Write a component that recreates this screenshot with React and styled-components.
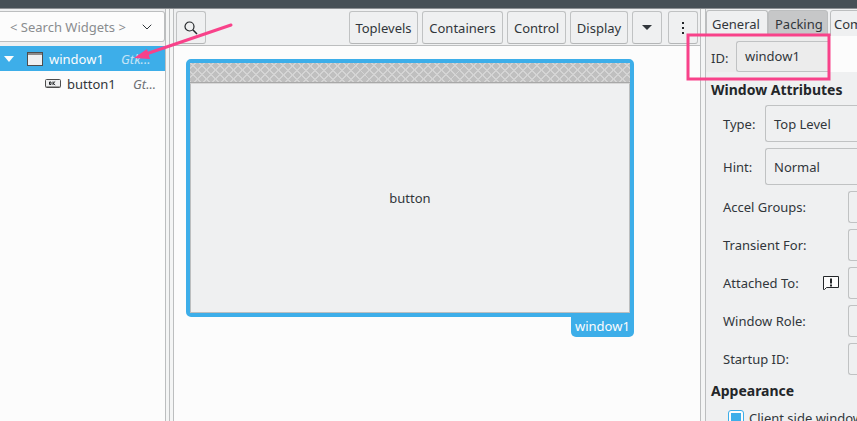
import styled, { createGlobalStyle } from "styled-components";
import { ChevronDown } from "lucide-react";

const GlobalStyle = createGlobalStyle`
  html, body {
    margin: 0;
    padding: 0;
    background: #eff0f1;
  }
  body {
    font-family: "Noto Sans", sans-serif;
    font-size: 13px;
    color: #31363b;
  }
`;

const Screen = styled.div`
  position: relative;
  width: 857px;
  height: 421px;
  overflow: hidden;
  display: flex;
  flex-direction: column;
`;

const TitleBar = styled.div`
  height: 8px;
  flex: none;
  background: #475057;
  border-bottom: 1px solid #8d9094;
`;

const Panes = styled.div`
  flex: 1;
  display: flex;
  min-height: 0;
`;

const Sidebar = styled.div`
  width: 165px;
  flex: none;
  display: flex;
  flex-direction: column;
  border-right: 1px solid #bcbebf;
  background: #fcfcfc;
`;

const SearchWrap = styled.div`
  height: 37px;
  flex: none;
  padding-top: 2px;
  box-sizing: border-box;
  background: #eff0f1;
`;

const SearchEntry = styled.div`
  height: 31px;
  box-sizing: border-box;
  display: flex;
  align-items: center;
  justify-content: space-between;
  padding: 0 9px 0 10px;
  background: #fcfcfc;
  border: 1px solid #bcbebf;
  border-left: none;
  border-radius: 0 3px 3px 0;
  color: #8a8c8f;
  svg {
    color: #31363b;
  }
`;

const TreeRow = styled.div`
  height: 25px;
  flex: none;
  display: flex;
  align-items: center;
  padding-left: ${(props) => props.$indent}px;
  background: ${(props) => (props.$selected ? "#3daee9" : "transparent")};
  color: ${(props) => (props.$selected ? "#fcfcfc" : "#31363b")};
`;

const Expander = styled.span`
  width: 0;
  height: 0;
  margin-right: 13px;
  border-left: 5px solid transparent;
  border-right: 5px solid transparent;
  border-top: 6px solid #fcfcfc;
`;

const TreeName = styled.span`
  width: ${(props) => props.$width}px;
  margin-left: 6px;
`;

const TreeType = styled.span`
  font-style: italic;
  opacity: 0.7;
`;

const Gutter = styled.div`
  width: ${(props) => props.$width}px;
  flex: none;
  box-sizing: border-box;
  background-color: #f4f5f5;
  background-image: linear-gradient(#bcbebf, #bcbebf);
  background-repeat: no-repeat;
  background-size: 1px 100%;
  background-position: ${(props) => props.$line}px 0;
  border-right: 1px solid #bcbebf;
`;

const Center = styled.div`
  flex: 1;
  min-width: 0;
  display: flex;
  flex-direction: column;
`;

const Toolbar = styled.div`
  height: 37px;
  flex: none;
  box-sizing: border-box;
  display: flex;
  align-items: flex-start;
  gap: 4px;
  padding: 2px 0 0 2px;
  background: #eff0f1;
  border-bottom: 1px solid #bcbebf;
`;

const ToolButton = styled.div`
  height: 33px;
  box-sizing: border-box;
  flex: none;
  width: ${(props) => props.$width}px;
  margin-left: ${(props) => props.$gapBefore || 0}px;
  display: flex;
  align-items: center;
  justify-content: center;
  background: #eff0f1;
  border: 1px solid #c0c2c3;
  border-bottom-color: #b4b6b7;
  border-radius: 3px;
  color: #31363b;
`;

const Caret = styled.span`
  width: 0;
  height: 0;
  border-left: 5px solid transparent;
  border-right: 5px solid transparent;
  border-top: 5px solid #31363b;
`;

const Canvas = styled.div`
  flex: 1;
  background: #fcfcfc;
  padding: 13px 0 0 12px;
`;

const PreviewWrap = styled.div`
  width: 448px;
  display: flex;
  flex-direction: column;
`;

const Preview = styled.div`
  height: 258px;
  box-sizing: border-box;
  border: 4px solid #3daee9;
  border-radius: 5px 5px 0 5px;
  display: flex;
  flex-direction: column;
  background: #eff0f1;
`;

const PreviewTitle = styled.div`
  height: 19px;
  flex: none;
  background-color: #bfbfbf;
  background-image:
    repeating-linear-gradient(45deg, #d4d4d4 0 1.4px, transparent 1.4px 6.4px),
    repeating-linear-gradient(-45deg, #d4d4d4 0 1.4px, transparent 1.4px 6.4px);
  border-bottom: 1px solid #a8a8a8;
`;

const PreviewBody = styled.div`
  flex: 1;
  display: flex;
  align-items: center;
  justify-content: center;
  border: 1px solid #bcbebf;
  border-top: 1px solid #d8d8d8;
`;

const PreviewTag = styled.div`
  align-self: flex-end;
  width: 63px;
  height: 20px;
  box-sizing: border-box;
  padding-left: 4px;
  line-height: 19px;
  background: #3daee9;
  color: #fcfcfc;
  border-radius: 0 0 5px 5px;
`;

const Inspector = styled.div`
  width: 151px;
  flex: none;
  display: flex;
  flex-direction: column;
  background: #eff0f1;
  box-sizing: border-box;
`;

const TabStrip = styled.div`
  height: 28px;
  flex: none;
  display: flex;
  padding-top: 1px;
  box-sizing: border-box;
`;

const Tab = styled.div`
  width: ${(props) => props.$width}px;
  flex: none;
  box-sizing: border-box;
  display: flex;
  align-items: center;
  justify-content: flex-start;
  padding-left: ${(props) => props.$pad}px;
  background: ${(props) => (props.$dim ? "#c6c7c8" : "#eff0f1")};
  border: 1px solid #bcbebf;
  border-bottom: ${(props) => (props.$active ? "none" : "1px solid #bcbebf")};
  border-radius: 3px 3px 0 0;
  margin-right: ${(props) => props.$after}px;
  white-space: nowrap;
  overflow: hidden;
`;

const IdRow = styled.div`
  display: flex;
  height: 36px;
  flex: none;
  align-items: stretch;
  margin-top: -1px;
`;

const IdLabel = styled.div`
  width: 30px;
  flex: none;
  padding-left: 5px;
  box-sizing: border-box;
  line-height: 44px;
  background: #ececec;
`;

const IdHolder = styled.div`
  width: 93px;
  flex: none;
  padding-top: 5px;
  box-sizing: border-box;
  background: #ececec;
`;

const IdInput = styled.div`
  height: 31px;
  box-sizing: border-box;
  border: 1px solid #c0c2c3;
  border-radius: 3px 0 0 3px;
  border-right: none;
  padding-left: 8px;
  line-height: 29px;
`;

const IdRest = styled.div`
  flex: 1;
  background: #fcfcfc;
`;

const SectionTitle = styled.div`
  font-weight: 700;
  font-size: 14px;
  line-height: 19px;
  padding-left: 5px;
  margin-top: ${(props) => props.$top}px;
  color: #232629;
`;

const FormRow = styled.div`
  height: ${(props) => props.$height}px;
  flex: none;
  display: flex;
  align-items: center;
  padding-left: 17px;
  margin-top: ${(props) => props.$top}px;
  position: relative;
`;

const RowLabel = styled.div`
  width: ${(props) => props.$width}px;
  flex: none;
  white-space: nowrap;
`;

const Field = styled.div`
  flex: 1;
  align-self: stretch;
  box-sizing: border-box;
  background: #eff0f1;
  border: 1px solid #c0c2c3;
  border-right: none;
  border-radius: 3px 0 0 3px;
  padding-left: 8px;
  display: flex;
  align-items: center;
`;

const WarnSlot = styled.span`
  position: absolute;
  left: 117px;
  top: 8px;
  display: flex;
`;

const CheckRow = styled.div`
  display: flex;
  align-items: center;
  gap: 5px;
  padding-left: 22px;
  margin-top: 9px;
  white-space: nowrap;
`;

const CheckBox = styled.span`
  width: 16px;
  height: 16px;
  flex: none;
  box-sizing: border-box;
  border: 1px solid #3daee9;
  border-radius: 3px;
  padding: 2px;
  background: #fcfcfc;
  &::before {
    content: "";
    display: block;
    width: 10px;
    height: 10px;
    background: #3daee9;
  }
`;

const Annotations = styled.svg`
  position: absolute;
  left: 0;
  top: 0;
  pointer-events: none;
`;

function WindowIcon() {
  return (
    <svg width="16" height="14" viewBox="0 0 16 14">
      <rect x="0.5" y="0.5" width="15" height="13" fill="#eff0f1" stroke="#4d4d4d" />
      <rect x="1" y="1" width="14" height="2" fill="#8a8a8a" />
    </svg>
  );
}

function ButtonIcon() {
  return (
    <svg width="16" height="9" viewBox="0 0 16 9">
      <rect x="0.5" y="0.5" width="15" height="8" rx="1" fill="#eff0f1" stroke="#4d4d4d" />
      <rect x="1" y="7" width="14" height="1" fill="#a0a0a0" />
      <path d="M4.5 3h1.5v2.5h-1.5zM8 2.5v3.5M8.2 4.2l2-1.7M8.2 4.2l2 1.8" fill="none" stroke="#232629" strokeWidth="1" />
    </svg>
  );
}

function SearchIcon() {
  return (
    <svg width="14" height="14" viewBox="0 0 14 14">
      <circle cx="5.5" cy="5.5" r="4.5" fill="none" stroke="#232629" strokeWidth="1.2" />
      <path d="M8.8 8.8L13 13" fill="none" stroke="#232629" strokeWidth="1.5" />
    </svg>
  );
}

function WarnIcon() {
  return (
    <svg width="16" height="16" viewBox="0 0 16 16">
      <path d="M0.5 1.5h15v11h-12l-2 2h-1z" fill="#fcfcfc" stroke="#232629" />
      <rect x="7" y="3.5" width="2" height="5" fill="#232629" />
      <rect x="7" y="9.5" width="2" height="2" fill="#232629" />
    </svg>
  );
}

function MoreIcon() {
  return (
    <svg width="4" height="14" viewBox="0 0 4 14">
      <rect x="1" y="1" width="2" height="2" fill="#232629" />
      <rect x="1" y="6" width="2" height="2" fill="#232629" />
      <rect x="1" y="11" width="2" height="2" fill="#232629" />
    </svg>
  );
}

const formRows = [
  { label: "Accel Groups:", top: 6 },
  { label: "Transient For:", top: 6 },
  { label: "Attached To:", top: 6, warn: true },
  { label: "Window Role:", top: 6 },
  { label: "Startup ID:", top: 6 },
];

export default function App() {
  return (
    <Screen>
      <GlobalStyle />
      <TitleBar />
      <Panes>
        <Sidebar>
          <SearchWrap>
            <SearchEntry>
              {"< Search Widgets >"}
              <ChevronDown size={16} strokeWidth={1.5} />
            </SearchEntry>
          </SearchWrap>
          <TreeRow $selected $indent={4}>
            <Expander />
            <WindowIcon />
            <TreeName $width={72}>window1</TreeName>
            <TreeType>Gtk...</TreeType>
          </TreeRow>
          <TreeRow $indent={45}>
            <ButtonIcon />
            <TreeName $width={66}>button1</TreeName>
            <TreeType>Gt...</TreeType>
          </TreeRow>
        </Sidebar>
        <Gutter $width={8} $line={3} />
        <Center>
          <Toolbar>
            <ToolButton $width={30}>
              <SearchIcon />
            </ToolButton>
            <ToolButton $width={69} $gapBefore={139}>Toplevels</ToolButton>
            <ToolButton $width={81}>Containers</ToolButton>
            <ToolButton $width={59}>Control</ToolButton>
            <ToolButton $width={58}>Display</ToolButton>
            <ToolButton $width={30}><Caret /></ToolButton>
            <ToolButton $width={30} $gapBefore={2}><MoreIcon /></ToolButton>
          </Toolbar>
          <Canvas>
            <PreviewWrap>
              <Preview>
                <PreviewTitle />
                <PreviewBody>button</PreviewBody>
              </Preview>
              <PreviewTag>window1</PreviewTag>
            </PreviewWrap>
          </Canvas>
        </Center>
        <Gutter $width={6} $line={0} />
        <Inspector>
          <TabStrip>
            <Tab $active $width={62} $pad={5} $after={0}>General</Tab>
            <Tab $dim $width={60} $pad={6} $after={2}>Packing</Tab>
            <Tab $width={40} $pad={3} $after={0}>Common</Tab>
          </TabStrip>
          <IdRow>
            <IdLabel>ID:</IdLabel>
            <IdHolder>
              <IdInput>window1</IdInput>
            </IdHolder>
            <IdRest />
          </IdRow>
          <SectionTitle $top={8}>Window Attributes</SectionTitle>
          <FormRow $height={37} $top={6}>
            <RowLabel $width={42}>Type:</RowLabel>
            <Field>Top Level</Field>
          </FormRow>
          <FormRow $height={37} $top={6}>
            <RowLabel $width={42}>Hint:</RowLabel>
            <Field>Normal</Field>
          </FormRow>
          {formRows.map((row) => (
            <FormRow key={row.label} $height={32} $top={row.top}>
              <RowLabel $width={125}>{row.label}</RowLabel>
              {row.warn && (
                <WarnSlot>
                  <WarnIcon />
                </WarnSlot>
              )}
              <Field />
            </FormRow>
          ))}
          <SectionTitle $top={6}>Appearance</SectionTitle>
          <CheckRow>
            <CheckBox />
            Client side window decorations
          </CheckRow>
        </Inspector>
      </Panes>
      <Annotations width="857" height="421" viewBox="0 0 857 421">
        <rect x="688" y="35" width="141" height="44" fill="none" stroke="#f8428a" strokeWidth="3" />
        <path d="M231 25L146 54" fill="none" stroke="#f8428a" strokeWidth="3" strokeLinecap="round" />
        <path d="M134 58L147 49L150 59Z" fill="#f8428a" />
      </Annotations>
    </Screen>
  );
}
